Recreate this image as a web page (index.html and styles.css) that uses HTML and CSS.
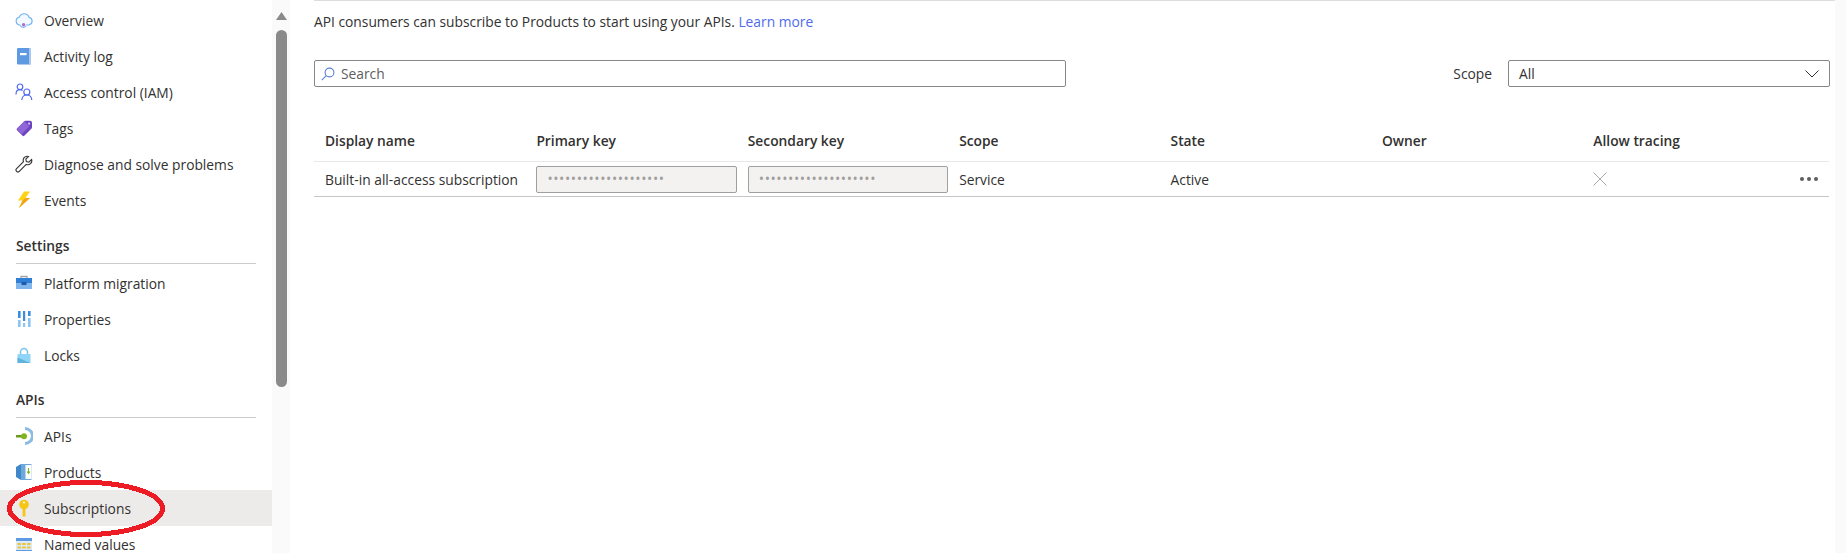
FILE: index.html
```html
<!DOCTYPE html>
<html lang="en">
<head>
<meta charset="utf-8">
<title>Subscriptions</title>
<link rel="stylesheet" href="styles.css">
</head>
<body>
<div class="page">
  <nav class="sidebar">
    <ul class="group">
      <li class="item"><svg class="ico" viewBox="0 0 18 18"><path d="M5 14a4 4 0 0 1-.7-7.900A5.200 5.200 0 0 1 14 6.200 4 4 0 0 1 14 14h-3" fill="#f2f9ff" stroke="#6fb2ee" stroke-width="1.100"/><path d="M5 14c1.300 3.200 4.800 2.900 6 .8" fill="none" stroke="#83b9f9" stroke-width="1.100"/><circle cx="8.600" cy="13.800" r="1.700" fill="#b06fd0"/></svg><span>Overview</span></li>
      <li class="item"><svg class="ico" viewBox="0 0 18 18"><rect x="2" y="1" width="14" height="16.500" rx="1.200" fill="#5e9ae2"/><rect x="14" y="1" width="2" height="16.500" fill="#a9c8ee"/><rect x="5" y="6" width="6.500" height="2.200" fill="#fff"/></svg><span>Activity log</span></li>
      <li class="item"><svg class="ico" viewBox="0 0 18 18" fill="none" stroke="#4f6bed" stroke-width="1.200"><circle cx="5" cy="3.800" r="2.800"/><path d="M1 11.500c0-3 1.800-4.800 4-4.800 1 0 1.800.2 2.500.7"/><circle cx="11.800" cy="9" r="3"/><path d="M6.800 17c.2-3 2.200-5 5-5s4.800 2 5 5"/></svg><span>Access control (IAM)</span></li>
      <li class="item"><svg class="ico" viewBox="0 0 18 18"><path d="M2 9.500 9.300 2.200a1.500 1.500 0 0 1 1-.4h4.700a2 2 0 0 1 2 2v4.600a1.500 1.500 0 0 1-.4 1L9.300 16.700a1.200 1.200 0 0 1-1.700 0L2 11.200a1.200 1.200 0 0 1 0-1.700Z" fill="#6f45bf"/><path d="M2 9.500 9.300 2.200l5 5-7.800 8.300Z" fill="#8e66d8"/><circle cx="14.100" cy="4.600" r="1.100" fill="#d9ccf2"/></svg><span>Tags</span></li>
      <li class="item"><svg class="ico" viewBox="0 0 18 18" fill="none" stroke="#323130" stroke-width="1.100"><path d="M11.800 1.200a4 4 0 0 0-3.300 5.500L1.600 13.600a1.900 1.900 0 0 0 2.700 2.700l6.900-6.900a4 4 0 0 0 5.400-4.900l-2.800 2.700-2.400-.6-.6-2.400 2.700-2.800a4 4 0 0 0-1.700-.2Z"/></svg><span>Diagnose and solve problems</span></li>
      <li class="item"><svg class="ico" viewBox="0 0 18 18"><path d="M9 .5 3 9.500h4.500L4 17l11-10H10.500L15 .5Z" fill="#fcd116"/><path d="M7.500 9.500 4 17l11-10H10.500Z" fill="#f2a41c"/></svg><span>Events</span></li>
    </ul>
    <h3 class="heading">Settings</h3>
    <ul class="group">
      <li class="item"><svg class="ico" viewBox="0 0 18 18"><path d="M6 4V2.500h6V4" fill="none" stroke="#a6a6a6" stroke-width="1.300"/><rect x="1" y="4" width="16" height="5" fill="#2f7fd6"/><rect x="1" y="9" width="16" height="6" fill="#7fb5ec"/><rect x="6.500" y="8" width="5" height="3" fill="#1e5aa8"/></svg><span>Platform migration</span></li>
      <li class="item"><svg class="ico" viewBox="0 0 18 18"><rect x="3" y="1" width="2.600" height="7" fill="#3c8ce0"/><rect x="3" y="10" width="2.600" height="7" fill="#8cc4f2"/><rect x="8" y="1" width="2.200" height="10" fill="#3c8ce0"/><rect x="8" y="13" width="2.200" height="4" fill="#8cc4f2"/><rect x="13" y="1" width="2.600" height="5" fill="#3c8ce0"/><rect x="13" y="8" width="2.600" height="9" fill="#8cc4f2"/></svg><span>Properties</span></li>
      <li class="item"><svg class="ico" viewBox="0 0 18 18"><path d="M5.500 8V6a3.500 3.500 0 0 1 7 0v2" fill="none" stroke="#7cc2ea" stroke-width="1.500"/><rect x="2.500" y="8" width="13" height="9" rx=".8" fill="#90d4f7"/><path d="M2.500 11.500 15.500 17h-13Z" fill="#5fb3dc"/></svg><span>Locks</span></li>
    </ul>
    <h3 class="heading tight">APIs</h3>
    <ul class="group">
      <li class="item"><svg class="ico" viewBox="0 0 18 18"><path d="M10 1.500a7.500 7.500 0 0 1 0 15" fill="none" stroke="#8dbce3" stroke-width="3"/><rect x="1" y="8" width="7" height="2.500" fill="#6c9a1f"/><circle cx="9" cy="9.200" r="3" fill="#7fb320"/></svg><span>APIs</span></li>
      <li class="item"><svg class="ico" viewBox="0 0 18 18"><path d="M1 4l5-3v16l-5-3Z" fill="#3f87c9"/><path d="M6 1h10.500v16H6Z" fill="#6fa8dc"/><rect x="10.500" y="2" width="6" height="14" fill="#fff"/><path d="M13.500 5v5m-1.500-1.500 1.500 1.800 1.500-1.800" stroke="#7fb320" stroke-width="1.100" fill="none"/></svg><span>Products</span></li>
      <li class="item active"><svg class="ico" viewBox="0 0 18 18"><circle cx="9" cy="5.500" r="4.800" fill="#f5c518"/><rect x="7.600" y="7" width="2.800" height="10.500" fill="#f5c518"/><circle cx="9" cy="3.600" r="1" fill="#fff"/></svg><span>Subscriptions</span></li>
      <li class="item"><svg class="ico" viewBox="0 0 18 18"><rect x="1" y="3" width="16" height="13" fill="#5e9ae2"/><rect x="1" y="6" width="16" height="9" fill="#dbe9f8"/><path d="M2.500 8h3.500v2H2.500ZM7.200 8h3.500v2H7.200ZM12 8h3.500v2H12ZM2.500 11.500h3.500v2H2.500ZM7.200 11.500h3.500v2H7.200ZM12 11.500h3.500v2H12Z" fill="#e8c53a"/></svg><span>Named values</span></li>
    </ul>
  </nav>
  <div class="nav-scroll">
    <svg class="arrow" viewBox="0 0 11 8"><path d="M5.500 0 11 8H0Z" fill="#8a8a8a"/></svg>
    <div class="thumb"></div>
  </div>
  <main class="content">
    <p class="intro">API consumers can subscribe to Products to start using your APIs. <a href="#">Learn more</a></p>
    <div class="toolbar">
      <div class="search"><svg class="search-ico" viewBox="0 0 14 14" fill="none" stroke="#5a7fd6" stroke-width="1.100"><circle cx="8.500" cy="5.500" r="4.400"/><path d="M5.300 8.700.8 13.200"/></svg><span>Search</span></div>
      <div class="scope">
        <label class="scope-label">Scope</label>
        <div class="select"><span>All</span><svg class="chev" viewBox="0 0 14 8" fill="none" stroke="#323130" stroke-width="1"><path d="M.5.500 7 7 13.500.500"/></svg></div>
      </div>
    </div>
    <div class="table">
      <div class="row head">
        <div class="cell">Display name</div><div class="cell">Primary key</div><div class="cell">Secondary key</div><div class="cell">Scope</div><div class="cell">State</div><div class="cell">Owner</div><div class="cell">Allow tracing</div>
      </div>
      <div class="row body">
        <div class="cell">Built-in all-access subscription</div>
        <div class="cell"><div class="key first-key">••••••••••••••••••••</div></div>
        <div class="cell"><div class="key">••••••••••••••••••••</div></div>
        <div class="cell">Service</div>
        <div class="cell">Active</div>
        <div class="cell"></div>
        <div class="cell last"><svg class="x" viewBox="0 0 14 14" fill="none" stroke="#a8a8a8" stroke-width="1"><path d="M.5.500l13 13M13.500.500l-13 13"/></svg><span class="more"><i></i><i></i><i></i></span></div>
      </div>
    </div>
  </main>
  <div class="page-scroll"></div>
  <svg class="ring" viewBox="0 0 166 62" fill="none" shape-rendering="crispEdges"><ellipse cx="83" cy="30.500" rx="76.500" ry="26" stroke="#ed1c24" stroke-width="5"/></svg>
</div>
</body>
</html>
```
FILE: styles.css
```css
* { box-sizing: border-box; }
html, body { margin: 0; height: 100%; overflow: hidden; background: #fff; }
body { font-family: "Open Sans", "Noto Sans", sans-serif; font-size: 13.8px; color: #323130; }
.page { position: relative; display: flex; height: 553px; overflow: hidden; }
.sidebar { width: 272px; flex: none; padding-top: 2px; height: 553px; overflow: hidden; }
.group { list-style: none; margin: 0; padding: 0; }
.item { display: flex; align-items: center; height: 36px; padding-left: 15px; gap: 11px; }
.item.active { background: #edebe9; }
.ico { width: 18px; height: 18px; flex: none; }
.heading { margin: 18px 16px 1px; height: 28px; line-height: 20px; border-bottom: 1px solid #ccc; font-size: 13.8px; font-weight: 600; }
.heading.tight { margin-top: 17px; margin-bottom: 0; }
.nav-scroll { width: 18px; flex: none; background: #fafafa; padding: 12px 4px 0 4px; margin-right: 24px; }
.arrow { display: block; width: 11px; height: 8px; }
.thumb { width: 11px; height: 357px; margin-top: 10px; background: #8a8a8a; border-radius: 6px; }
.content { flex: 1; min-width: 0; border-top: 1px solid #ddd; }
.intro { margin: 0; padding-top: 12px; height: 59px; line-height: 18px; }
.intro a { color: #4f6bed; text-decoration: none; }
.toolbar { display: flex; justify-content: space-between; padding-right: 5px; }
.search { display: flex; align-items: center; width: 752px; height: 27px; border: 1px solid #8a8886; border-radius: 2px; padding-left: 6px; gap: 6px; color: #605e5c; }
.search-ico { width: 14px; height: 14px; }
.scope { display: flex; align-items: center; gap: 16px; }
.select { display: flex; align-items: center; justify-content: space-between; width: 322px; height: 27px; border: 1px solid #8a8886; border-radius: 2px; padding: 0 10px; }
.chev { width: 14px; height: 8px; }
.table { margin-top: 26px; margin-right: 6px; }
.row { display: grid; grid-template-columns: repeat(7, 211.400px) 1fr; }
.head { height: 49px; padding-top: 6px; align-items: center; font-weight: 600; border-bottom: 1px solid #e8e8e8; }
.body { height: 35px; align-items: center; border-bottom: 1px solid #c8c6c4; }
.cell { padding-left: 11px; white-space: nowrap; }
.key { width: 200px; height: 27px; line-height: 23px; padding-left: 10px; background: #f3f2f1; border: 1px solid #a19f9d; border-radius: 2px; color: #a19f9d; font-size: 14px; letter-spacing: .6px; overflow: hidden; }
.first-key { width: 201px; }
.last { grid-column: 7 / span 2; display: flex; justify-content: space-between; align-items: center; padding-right: 11px; }
.x { width: 14px; height: 14px; }
.more { display: flex; gap: 3px; }
.more i { width: 4px; height: 4px; border-radius: 50%; background: #605e5c; }
.page-scroll { flex: none; width: 11px; background: #fafafa; }
.ring { position: absolute; left: 3px; top: 478px; width: 166px; height: 62px; }
```
